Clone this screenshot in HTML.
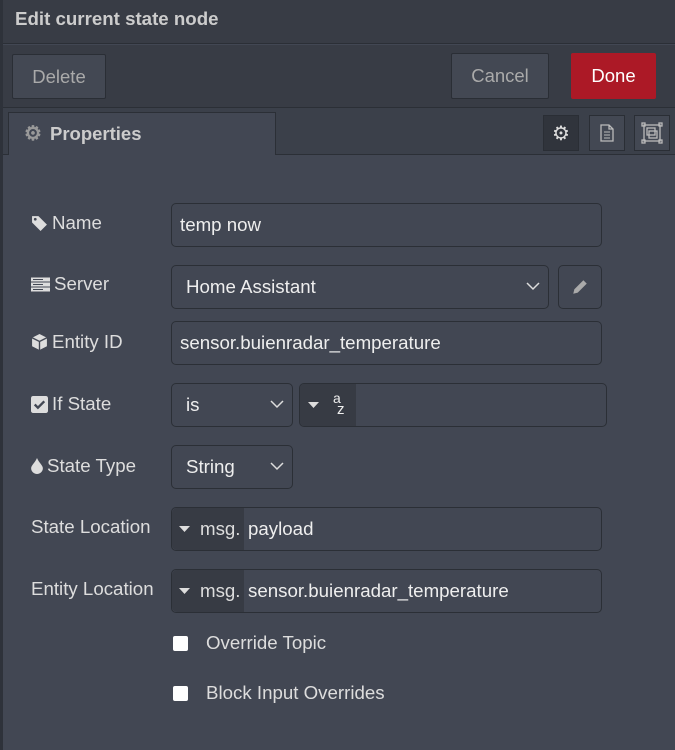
<!DOCTYPE html>
<html><head><style>
*{box-sizing:border-box;margin:0;padding:0}
body{width:675px;height:750px;overflow:hidden;background:#424753;font-family:"Liberation Sans",sans-serif;color:#ddd;position:relative}
.a{position:absolute}
.hdr{left:0;top:0;width:675px;height:44px;background:#383c45;border-bottom:1px solid #2b2f36}
.tb{left:0;top:45px;width:675px;height:63px;background:#383c45;border-bottom:1px solid #2b2f36}
.btn{position:absolute;border:1px solid #2a2e35;background:#434853;color:#aaa;font-size:18.5px;display:flex;align-items:center;justify-content:center;border-radius:2px}
.tabrow{left:3px;top:108px;width:672px;height:47px;background:#3b404a;border-bottom:1px solid #2b2f36}
.tab{left:8px;top:112px;width:268px;height:43px;background:#424753;border:1px solid #2b2f36;border-bottom:none;font-weight:bold;font-size:18.5px;color:#ccc}
.ib{position:absolute;top:115px;width:36px;height:36px;border:1px solid #2a2e35;background:#434853;display:flex;align-items:center;justify-content:center}
.lbl{position:absolute;left:31px;font-size:18.7px;color:#ddd;display:flex;align-items:center;gap:4px}
.in{position:absolute;left:171px;height:44px;border:1px solid #2b2f36;border-radius:5px;background:#424753;font-size:18.7px;color:#eee;display:flex;align-items:center;padding-left:8px}
.chev{position:absolute;right:8px;top:15px}
.pre{height:100%;background:#373b44;display:flex;align-items:center;padding-left:7px;margin-left:-8px;border-radius:5px 0 0 5px;color:#ddd}
.cb{position:absolute;left:173px;width:15px;height:15px;background:#fff;border-radius:2px}
</style></head><body>
<div class="a" style="left:0;top:0;width:3px;height:750px;background:#2e323a;z-index:5"></div>
<div class="a hdr"><div class="a" style="left:15px;top:8px;font-weight:bold;font-size:18.7px;color:#ccc">Edit current state node</div></div>
<div class="a tb"></div>
<div class="btn" style="left:12px;top:54px;width:94px;height:45px">Delete</div>
<div class="btn" style="left:451px;top:53px;width:98px;height:46px">Cancel</div>
<div class="btn" style="left:571px;top:53px;width:85px;height:46px;background:#ac1926;border-color:#ac1926;color:#fff">Done</div>
<div class="a tabrow"></div>
<div class="a tab"><span class="a" style="left:15px;top:8px;color:#999;font-size:20px">⚙</span><span class="a" style="left:41px;top:10px">Properties</span></div>
<div class="ib" style="left:543px;background:#30343c;color:#ddd;font-size:20px">⚙</div>
<div class="ib" style="left:589px"><svg width="14" height="18" viewBox="0 0 14 18"><path d="M1 1h8l4 4v12H1z M9 1v4h4" fill="none" stroke="#bbb" stroke-width="1.3"/><path d="M4 8h6M4 11h6M4 14h6" stroke="#bbb"/></svg></div>
<div class="ib" style="left:634px"><svg width="22" height="22" viewBox="0 0 22 22" fill="none" stroke="#bbb" stroke-width="1.3"><rect x="3" y="3" width="16" height="16"/><rect x="6" y="6" width="8" height="7"/><rect x="8" y="9" width="8" height="7"/><rect x="1" y="1" width="3" height="3"/><rect x="18" y="1" width="3" height="3"/><rect x="1" y="18" width="3" height="3"/><rect x="18" y="18" width="3" height="3"/></svg></div>

<div class="lbl" style="top:212px"><svg width="17" height="16" viewBox="0 0 16 15"><path d="M1 1h6l8 8-6 6-8-8z" fill="#ddd"/><circle cx="4" cy="4" r="1.3" fill="#424753"/></svg>Name</div>
<div class="in" style="top:203px;width:431px">temp now</div>

<div class="lbl" style="top:273px"><svg width="19" height="15" viewBox="0 0 19 14"><rect x="0" y="0" width="19" height="4" fill="#ddd"/><rect x="0" y="5" width="19" height="4" fill="#ddd"/><rect x="0" y="10" width="19" height="4" fill="#ddd"/><path d="M2 2h10M2 7h10M2 12h10" stroke="#424753"/></svg>Server</div>
<div class="in" style="top:265px;width:378px;padding-left:14px">Home Assistant<svg class="chev" width="14" height="10"><path d="M1 2l6 6 6-6" fill="none" stroke="#ddd" stroke-width="1.5"/></svg></div>
<div class="in" style="top:265px;left:558px;width:44px;padding:0;justify-content:center"><svg width="18" height="18" viewBox="0 0 16 16"><path d="M2 14l1-4 8-8 3 3-8 8z" fill="#aaa"/></svg></div>

<div class="lbl" style="top:331px"><svg width="17" height="18" viewBox="0 0 16 17"><path d="M8 1l7 3.5v8L8 16 1 12.5v-8z" fill="#ddd"/><path d="M1 4.5L8 8l7-3.5M8 8v8" stroke="#424753" stroke-width="1.3" fill="none"/></svg>Entity ID</div>
<div class="in" style="top:321px;width:431px">sensor.buienradar_temperature</div>

<div class="lbl" style="top:393px"><svg width="17" height="17" viewBox="0 0 16 16"><rect width="16" height="16" rx="2" fill="#ddd"/><path d="M3.5 8l3 3 6-6" stroke="#424753" stroke-width="2.2" fill="none"/></svg>If State</div>
<div class="in" style="top:383px;width:122px;padding-left:14px">is<svg class="chev" width="14" height="10"><path d="M1 2l6 6 6-6" fill="none" stroke="#ddd" stroke-width="1.5"/></svg></div>
<div class="in" style="top:383px;left:299px;width:308px;padding-left:0;overflow:hidden"><div style="width:56px;height:100%;background:#373b44;position:relative"><svg class="a" style="left:8px;top:18px" width="11" height="7"><path d="M0 0h11L5.5 6z" fill="#ddd"/></svg><span class="a" style="left:33px;top:6px;font-size:14px">a</span><span class="a" style="left:37px;top:17px;font-size:15px">z</span></div></div>

<div class="lbl" style="top:455px"><svg width="12" height="16" viewBox="0 0 11 15"><path d="M5.5 0C4 4 0 7 0 9.5a5.5 5.5 0 0011 0C11 7 7 4 5.5 0z" fill="#ddd"/></svg>State Type</div>
<div class="in" style="top:445px;width:122px;padding-left:14px">String<svg class="chev" width="14" height="10"><path d="M1 2l6 6 6-6" fill="none" stroke="#ddd" stroke-width="1.5"/></svg></div>

<div class="lbl" style="top:516px">State Location</div>
<div class="in" style="top:507px;width:431px"><div class="pre" style="width:72px"><svg width="11" height="7" style="margin-right:10px"><path d="M0 0h11L5.5 6z" fill="#ddd"/></svg>msg.</div><span style="margin-left:4px">payload</span></div>

<div class="lbl" style="top:578px">Entity Location</div>
<div class="in" style="top:569px;width:431px"><div class="pre" style="width:72px"><svg width="11" height="7" style="margin-right:10px"><path d="M0 0h11L5.5 6z" fill="#ddd"/></svg>msg.</div><span style="margin-left:4px">sensor.buienradar_temperature</span></div>

<div class="cb" style="top:636px"></div>
<div class="a" style="left:206px;top:632px;font-size:18.7px;color:#ddd">Override Topic</div>
<div class="cb" style="top:686px"></div>
<div class="a" style="left:206px;top:682px;font-size:18.7px;color:#ddd">Block Input Overrides</div>
</body></html>
